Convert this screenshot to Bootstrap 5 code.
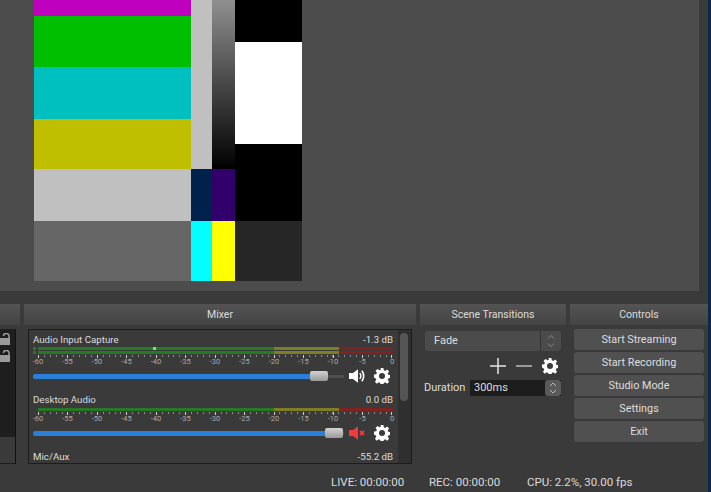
<!DOCTYPE html>
<html lang="en">
<head>
<meta charset="utf-8">
<title>OBS</title>
<link href="https://cdn.jsdelivr.net/npm/bootstrap@5.3.0/dist/css/bootstrap.min.css" rel="stylesheet">
<style>
html,body{height:100%;margin:0;overflow:hidden}
body{background:#0f2747;font-family:Roboto,"Open Sans","Liberation Sans",sans-serif;font-size:11px;color:#dedede;line-height:14px}
.appwin{width:708px;height:492px;background:#3a3a3a;flex:none;overflow:hidden}
.prevarea{width:699px;height:291px;background:#4c4c4c;padding-left:34px}
.bars{display:grid;grid-template-columns:157px 21px 23px 67px;grid-template-rows:16px 51px 52px 50px 52px 60px;width:268px}
.c-mag{background:#bf00bf}.c-grn{background:#00bf00}.c-cya{background:#00bfbf}.c-yel{background:#bfbf00}
.c-lgt{background:#c0c0c0}.c-mid{background:#666}.c-navy{background:#00214c}.c-pur{background:#32006a}
.c-acy{background:#0ff}.c-ayl{background:#ff0}.c-blk{background:#000}.c-wht{background:#fff}.c-drk{background:#262626}
.c-grey{background:#c0c0c0;grid-row:1/5}
.c-grad{background:linear-gradient(#8f8f8f,#000);grid-row:1/5}
.bcol4{grid-column:4;grid-row:1/7;display:flex;flex-direction:column}
.b1{height:42px}.b2{height:102px}.b3{height:77px}.b4{height:60px}
.dockrow{margin-top:13px;gap:4px;height:171px}
.dockbox{flex:none}
.d0{width:20px}.d1{width:392px}.d2{width:146px}.d3{width:138px}
.dtitle{height:21px;background:linear-gradient(#535353,#444);text-align:center;line-height:22px;font-size:10.500px;color:#dcdcdc}
.srclist{margin-top:4px;width:16px;height:135px;background:#1e1e1e;border-right:1px solid #111}
.srcfoot{height:27px;background:#3a3a3a;border-bottom:1px solid #1c1c1c}
.locks{padding-top:4px;gap:5px}
.mixbox{margin:4px 4px 0;height:135px;border:1px solid #1c1c1c;overflow:hidden}
.chans{width:369px;padding:3px 5px 0 4px;overflow:hidden}
.scrl{width:13px;background:#2f2f2f;padding:3px 2px 0 2px}
.scrthumb{width:8px;height:68px;background:#555;border-radius:4px}
.cname{height:14px;line-height:14px;font-size:9.700px}
.mtr{margin-left:5px;position:relative}
.barline{height:3px;margin-bottom:1px;background:linear-gradient(90deg,#267a26 0,#267a26 236px,#7d7d24 236px,#7d7d24 301px,#7f2222 301px)}
.peak{position:absolute;left:-5px;width:3px;height:3px;background:#267a26}
.pdot{position:absolute;left:115px;top:0;width:3px;height:3px;background:#5cf55c}
.ticks{height:3px;margin-left:5px;width:355px;background:repeating-linear-gradient(90deg,#d0d0d0 0,#d0d0d0 1px,transparent 1px,transparent 29.45px),repeating-linear-gradient(90deg,#8c8c8c 0,#8c8c8c 1px,transparent 1px,transparent 5.89px) 0 0/100% 2px no-repeat}
.lbls{margin-left:5px;height:7px;width:354px}
.lbl{width:0;display:flex;justify-content:center;white-space:nowrap;font-size:7.500px;line-height:7px;color:#aaa}
.ctrlline{height:22px;gap:5px}
.trk{width:311px}
.trkon{height:5px;background:#2a7fd9;border-radius:2px 0 0 2px}
.thmb{width:18px;height:10px;background:linear-gradient(#d2d2d2,#999);border-radius:2px;flex:none}
.trkoff{flex:1;height:3px;background:#4f4f4f}
.sp2{margin-top:1px}
.gapc{margin-top:6px}
.trpane{padding:6px 5px 0}
.combo{height:20px;background:#4b4b4b;border-radius:3px;padding-left:9px;line-height:20px}
.cb-sep{width:21px;border-left:1px solid #333;height:20px}
.toolline{margin-top:6px;height:18px;gap:10px;padding-right:3px}
.durline{margin-top:5px;height:16px;margin-left:-1px}
.durin{width:91px;height:16px;background:#1d1d1d;padding-left:4px;line-height:16px}
.spinb{width:16px;height:16px;background:#5a5a5a;border-radius:3px}
.ctlpane{padding:4px 4px 0;gap:2px}
.ctlbtn{--bs-btn-padding-y:0;--bs-btn-padding-x:0;--bs-btn-font-size:10.800px;--bs-btn-line-height:22px;--bs-btn-color:#dedede;--bs-btn-bg:#505050;--bs-btn-border-width:0;--bs-btn-border-radius:3px;--bs-btn-hover-bg:#5a5a5a;--bs-btn-hover-color:#fff;height:21px;width:130px}
.stat{height:17px;line-height:14px;padding-left:331px;font-size:11.500px;color:#dcdcdc}
.s1{width:98px}.s2{width:98px}
</style>
</head>
<body class="d-flex">
<svg width="0" height="0" class="d-none">
<defs>
<symbol id="gear" viewBox="0 0 16 16"><g fill="#fff"><path fill-rule="evenodd" d="M6.600 0h2.800l.4 2.300 1.400.6L13.100 1.500l2 2-1.400 1.900.6 1.400 2.300.4v2.800l-2.300.4-.6 1.400 1.400 1.900-2 2-1.900-1.400-1.400.6-.4 2.300H6.600l-.4-2.300-1.400-.6-1.900 1.400-2-2 1.400-1.900-.6-1.400L0 9.400V6.600l2.300-.4.6-1.400L1.500 2.900l2-2 1.900 1.400 1.400-.6zM8 5a3 3 0 1 0 0 6 3 3 0 0 0 0-6z"/></g></symbol>
<symbol id="spk" viewBox="0 0 16 16"><path fill="#fff" d="M0 5h4L9 1.200v13.600L4 11H0z"/><path fill="none" stroke="#fff" stroke-width="1.600" d="M10.700 5.200a4 4 0 0 1 0 5.600M12.800 2.800a8 8 0 0 1 0 10.400"/></symbol>
<symbol id="mute" viewBox="0 0 16 16"><path fill="#f43a3a" d="M0 5h4L9 1.200v13.600L4 11H0z"/><path stroke="#f43a3a" stroke-width="1.800" d="M11 6l4 4M15 6l-4 4"/></symbol>
<symbol id="lck" viewBox="0 0 10 12"><path fill="#9a9a9a" d="M0 5h10v7H0z"/><path fill="none" stroke="#9a9a9a" stroke-width="1.500" d="M9 5V3.500a2.800 2.800 0 0 0-5.600-.5"/></symbol>
</defs>
</svg>
<div class="appwin d-flex flex-column">
  <div class="prevarea">
    <div class="bars">
      <div class="c-mag"></div><div class="c-grey" style="grid-column:2"></div><div class="c-grad" style="grid-column:3"></div>
      <div class="bcol4"><div class="b1 c-blk"></div><div class="b2 c-wht"></div><div class="b3 c-blk"></div><div class="b4 c-drk"></div></div>
      <div class="c-grn" style="grid-column:1"></div>
      <div class="c-cya" style="grid-column:1"></div>
      <div class="c-yel" style="grid-column:1"></div>
      <div class="c-lgt" style="grid-column:1"></div><div class="c-navy"></div><div class="c-pur"></div>
      <div class="c-mid" style="grid-column:1"></div><div class="c-acy"></div><div class="c-ayl"></div>
    </div>
  </div>
  <div class="dockrow d-flex">
    <div class="dockbox d0">
      <div class="dtitle"></div>
      <div class="srclist d-flex flex-column">
        <div class="locks flex-grow-1 d-flex flex-column align-items-start">
          <svg width="10" height="12"><use href="#lck"/></svg>
          <svg width="10" height="12"><use href="#lck"/></svg>
        </div>
        <div class="srcfoot"></div>
      </div>
    </div>
    <div class="dockbox d1">
      <div class="dtitle">Mixer</div>
      <div class="mixbox d-flex">
        <div class="chans flex-grow-0">
          <div class="cname d-flex justify-content-between"><span>Audio Input Capture</span><span>-1.3 dB</span></div>
          <div class="mtr">
            <div class="peak" style="top:0"></div><div class="peak" style="top:4px"></div><div class="pdot"></div>
            <div class="barline"></div><div class="barline"></div>
          </div>
          <div class="ticks"></div>
          <div class="lbls d-flex justify-content-between"><span class="lbl">-60</span><span class="lbl">-55</span><span class="lbl">-50</span><span class="lbl">-45</span><span class="lbl">-40</span><span class="lbl">-35</span><span class="lbl">-30</span><span class="lbl">-25</span><span class="lbl">-20</span><span class="lbl">-15</span><span class="lbl">-10</span><span class="lbl">-5</span><span class="lbl">0</span></div>
          <div class="ctrlline d-flex align-items-center">
            <div class="trk d-flex align-items-center"><div class="trkon" style="width:277px"></div><div class="thmb"></div><div class="trkoff"></div></div>
            <svg width="16" height="16"><use href="#spk"/></svg>
            <svg width="16" height="16" class="ms-1"><use href="#gear"/></svg>
          </div>
          <div class="cname gapc d-flex justify-content-between"><span>Desktop Audio</span><span>0.0 dB</span></div>
          <div class="mtr sp2"><div class="barline"></div></div>
          <div class="ticks"></div>
          <div class="lbls d-flex justify-content-between"><span class="lbl">-60</span><span class="lbl">-55</span><span class="lbl">-50</span><span class="lbl">-45</span><span class="lbl">-40</span><span class="lbl">-35</span><span class="lbl">-30</span><span class="lbl">-25</span><span class="lbl">-20</span><span class="lbl">-15</span><span class="lbl">-10</span><span class="lbl">-5</span><span class="lbl">0</span></div>
          <div class="ctrlline d-flex align-items-center">
            <div class="trk d-flex align-items-center"><div class="trkon" style="width:292px"></div><div class="thmb"></div><div class="trkoff"></div></div>
            <svg width="16" height="16"><use href="#mute"/></svg>
            <svg width="16" height="16" class="ms-1"><use href="#gear"/></svg>
          </div>
          <div class="cname gapc d-flex justify-content-between"><span>Mic/Aux</span><span>-55.2 dB</span></div>
        </div>
        <div class="scrl"><div class="scrthumb"></div></div>
      </div>
    </div>
    <div class="dockbox d2">
      <div class="dtitle">Scene Transitions</div>
      <div class="trpane">
        <div class="combo d-flex justify-content-between"><span>Fade</span>
          <div class="cb-sep d-flex align-items-center justify-content-center"><svg width="8" height="14" fill="none" stroke="#888"><path d="M1 4.500l3-3 3 3M1 9.500l3 3 3-3"/></svg></div>
        </div>
        <div class="toolline d-flex justify-content-end align-items-center">
          <svg width="16" height="16" stroke="#e6e6e6" stroke-width="1.500"><path d="M0 8h16M8 0v16"/></svg>
          <svg width="16" height="16" stroke="#bdbdbd" stroke-width="1.500"><path d="M0 8h16"/></svg>
          <svg width="16" height="16"><use href="#gear"/></svg>
        </div>
        <div class="durline d-flex align-items-center justify-content-between"><span>Duration</span>
          <div class="durin d-flex justify-content-between"><span>300ms</span>
            <div class="spinb d-flex align-items-center justify-content-center"><svg width="8" height="14" fill="none" stroke="#bbb"><path d="M1 5l3-3 3 3M1 9l3 3 3-3"/></svg></div>
          </div>
        </div>
      </div>
    </div>
    <div class="dockbox d3">
      <div class="dtitle">Controls</div>
      <div class="ctlpane d-flex flex-column">
        <button class="btn ctlbtn" type="button">Start Streaming</button>
        <button class="btn ctlbtn" type="button">Start Recording</button>
        <button class="btn ctlbtn" type="button">Studio Mode</button>
        <button class="btn ctlbtn" type="button">Settings</button>
        <button class="btn ctlbtn" type="button">Exit</button>
      </div>
    </div>
  </div>
  <div class="stat d-flex"><span class="s1">LIVE: 00:00:00</span><span class="s2">REC: 00:00:00</span><span>CPU: 2.2%, 30.00 fps</span></div>
</div>
<script src="https://cdn.jsdelivr.net/npm/bootstrap@5.3.0/dist/js/bootstrap.bundle.min.js"></script>
</body>
</html>
